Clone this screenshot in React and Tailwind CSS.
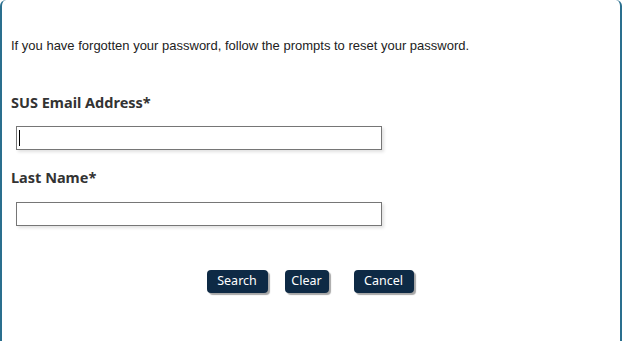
export default function App() {
  return (
    <div className="w-[622px] h-[341px] bg-white overflow-hidden">
      <div className="h-[360px] border-x-2 border-[#2a6f8e] border-t-0 rounded-t-[6px] bg-white">
        <p className="pt-[38px] pl-[9px] text-[13px] leading-[16px] text-[#222] font-['Liberation_Sans',sans-serif]">
          If you have forgotten your password, follow the prompts to reset your password.
        </p>

        <div className="pl-[9px] font-['Noto_Sans',sans-serif]">
          <label className="block mt-[38px] text-[14.5px] leading-[20px] font-bold text-[#333]">
            SUS Email Address*
          </label>
          <div className="mt-[14px] ml-[5px] w-[366px] h-[24px] border border-[#767676] bg-white shadow-[2px_2px_3px_rgba(0,0,0,0.12)] flex items-center pl-[2px]">
            <span className="w-px h-[16px] bg-black" />
          </div>

          <label className="block mt-[17px] text-[14.5px] leading-[20px] font-bold text-[#333]">
            Last Name*
          </label>
          <div className="mt-[15px] ml-[5px] w-[366px] h-[24px] border border-[#767676] bg-white shadow-[2px_2px_3px_rgba(0,0,0,0.12)]" />
        </div>

        <div className="mt-[44px] flex justify-center gap-[17px] pr-[2px] font-['Noto_Sans',sans-serif]">
          <button className="w-[61px] h-[23px] rounded-[4px] bg-[#0e2a45] text-white text-[12.5px] shadow-[2px_2px_1px_rgba(0,0,0,0.35)]">
            Search
          </button>
          <button className="w-[44px] h-[23px] rounded-[4px] bg-[#0e2a45] text-white text-[12.5px] shadow-[2px_2px_1px_rgba(0,0,0,0.35)]">
            Clear
          </button>
          <button className="w-[60px] h-[23px] rounded-[4px] bg-[#0e2a45] text-white text-[12.5px] shadow-[2px_2px_1px_rgba(0,0,0,0.35)] ml-[8px]">
            Cancel
          </button>
        </div>
      </div>
    </div>
  );
}
